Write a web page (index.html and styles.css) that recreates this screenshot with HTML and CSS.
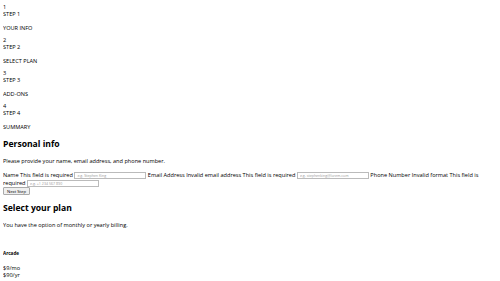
FILE: index.html
```html
<!DOCTYPE html>
<html lang="en">
<head>
    <meta charset="UTF-8">
    <meta name="viewport" content="width=device-width, initial-scale=1.0">
    <title>Multi-step form</title>
    <link rel="stylesheet" href="styles.css">
</head>
<body>
    <div class="steps">
        <div class="step">
            <div>1</div>
            <div>STEP 1</div>
            <p>YOUR INFO</p>
        </div>
        <div class="step">
            <div>2</div>
            <div>STEP 2</div>
            <p>SELECT PLAN</p>
        </div>
        <div class="step">
            <div>3</div>
            <div>STEP 3</div>
            <p>ADD-ONS</p>
        </div>
        <div class="step">
            <div>4</div>
            <div>STEP 4</div>
            <p>SUMMARY</p>
        </div>
    </div>

    <form class="form">
        <h2>Personal info</h2>
        <p>Please provide your name, email address, and phone number.</p>
        <label>Name <span>This field is required</span> <input type="text" placeholder="e.g. Stephen King"></label>
        <label>Email Address <span>Invalid email address</span> <span>This field is required</span> <input type="email" placeholder="e.g. stephenking@lorem.com"></label>
        <label>Phone Number <span>Invalid format</span> <span>This field is required</span> <input type="tel" placeholder="e.g. +1 234 567 890"></label>
        <br>
        <button type="button">Next Step</button>

        <h2>Select your plan</h2>
        <p>You have the option of monthly or yearly billing.</p>
        <div class="plan">
            <div class="plan-icon"></div>
            <h3>Arcade</h3>
            <div>$9/mo</div>
            <div>$90/yr</div>
        </div>
    </form>
</body>
</html>
```

FILE: styles.css
```css
body {
    margin: 4px 3px;
    font-family: 'Open Sans', sans-serif;
    font-size: 5.6px;
    color: #000;
    background: #fff;
}
.step {
    line-height: 7px;
}
.step p {
    margin: 7px 0 5px;
}
h2 {
    font-size: 8.6px;
    line-height: 15px;
    margin: 5.5px 0;
}
.form p {
    margin: 5.6px 0;
}
label {
    line-height: 8px;
}
input {
    width: 72px;
    height: 7px;
    padding: 0 2px;
    font-family: 'Open Sans', sans-serif;
    font-size: 3.6px;
    line-height: 5px;
    border: 1px solid #bbb;
    box-sizing: border-box;
    vertical-align: middle;
}
input::placeholder {
    color: #999;
}
button {
    font-family: 'Open Sans', sans-serif;
    font-size: 4.2px;
    padding: 0 3px;
    height: 8px;
    border: 1px solid #aaa;
    border-radius: 1px;
    background: #efefef;
    color: #000;
}
.plan-icon {
    height: 11px;
}
.plan h3 {
    font-size: 4.6px;
    margin: 4px 0 9px;
}
.plan div {
    line-height: 7px;
}
```
